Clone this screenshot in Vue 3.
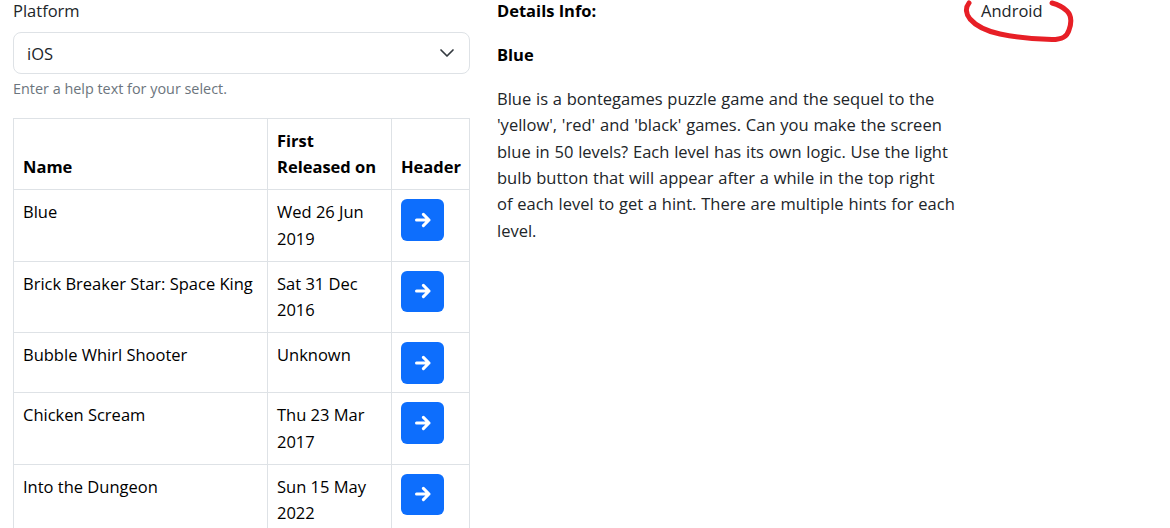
<script setup>
const rows = [
  { name: 'Blue', date: 'Wed 26 Jun 2019' },
  { name: 'Brick Breaker Star: Space King', date: 'Sat 31 Dec 2016' },
  { name: 'Bubble Whirl Shooter', date: 'Unknown' },
  { name: 'Chicken Scream', date: 'Thu 23 Mar 2017' },
  { name: 'Into the Dungeon', date: 'Sun 15 May 2022' },
]
</script>

<template>
  <div class="page">
    <section class="left">
      <label class="label">Platform</label>
      <div class="select">
        <span class="value">iOS</span>
        <svg class="chevron" viewBox="0 0 16 16" width="16" height="16">
          <path d="m2 5 6 6 6-6" fill="none" stroke="#343a40" stroke-width="1.7" stroke-linecap="round" stroke-linejoin="round" />
        </svg>
      </div>
      <div class="help">Enter a help text for your select.</div>
      <table class="games">
        <thead>
          <tr>
            <th class="c1">Name</th>
            <th class="c2">First Released on</th>
            <th class="c3">Header</th>
          </tr>
        </thead>
        <tbody>
          <tr v-for="r in rows" :key="r.name">
            <td>{{ r.name }}</td>
            <td>{{ r.date }}</td>
            <td>
              <button class="go" type="button" aria-label="Open">
                <svg viewBox="0 0 16 16" width="16" height="16">
                  <path d="M1.500 8h12.500M8.400 2.400 14 8l-5.600 5.600" fill="none" stroke="#fff" stroke-width="3" stroke-linecap="round" stroke-linejoin="round" />
                </svg>
              </button>
            </td>
          </tr>
        </tbody>
      </table>
    </section>
    <section class="details">
      <div class="strong">Details Info:</div>
      <div class="strong title">Blue</div>
      <p class="desc">Blue is a bontegames puzzle game and the sequel to the 'yellow', 'red' and 'black' games. Can you make the screen blue in 50 levels? Each level has its own logic. Use the light bulb button that will appear after a while in the top right of&nbsp;each level to get a hint. There are multiple hints for each level.</p>
    </section>
    <div class="tab">Android</div>
    <svg class="scribble" viewBox="0 0 1170 528" width="1170" height="528">
      <path d="M969 3C965 8 966 14 970 19C976 26 986 31 1000 34C1015 37 1035 39.500 1052 39.500C1062 39.500 1067 37 1069 30C1071.500 23 1072 16 1067 11C1063 7 1058 4.500 1052 3" fill="none" stroke="#e71f26" stroke-width="5" stroke-linecap="round" stroke-linejoin="round" />
    </svg>
  </div>
</template>

<style>
html, body { margin: 0; height: 528px; overflow: hidden; background: #fff; }
</style>

<style scoped>
.page {
  display: flex;
  align-items: flex-start;
  height: 528px;
  overflow: hidden;
  padding: 0 0 0 13px;
  box-sizing: border-box;
  font-family: "Open Sans", "Liberation Sans", sans-serif;
  font-size: 16.5px;
  line-height: 26.4px;
  color: #212529;
}
.left { width: 457px; flex: none; margin-top: -2px; }
.label { display: block; margin-bottom: 8px; }
.select {
  display: flex;
  align-items: center;
  justify-content: space-between;
  height: 42px;
  box-sizing: border-box;
  padding: 0 14px 0 13px;
  border: 1px solid #dee2e6;
  border-radius: 8px;
}
.value { position: relative; top: 1px; }
.chevron { display: block; }
.help { font-size: 14.4px; line-height: 21px; margin-top: 4px; color: #6c757d; }
.games {
  margin-top: 18.500px;
  width: 457px;
  table-layout: fixed;
  border-collapse: collapse;
  color: #000;
}
.games th, .games td {
  box-sizing: border-box;
  border: 1px solid #dee2e6;
  padding: 8.800px 9px;
  text-align: left;
  vertical-align: top;
  font-weight: 400;
}
.games th { vertical-align: bottom; font-weight: 700; color: #000; }
.c1 { width: 254px; }
.c2 { width: 124px; }
.c3 { width: 78px; }
.go {
  display: flex;
  align-items: center;
  justify-content: center;
  width: 43px;
  height: 41.600px;
  padding: 0;
  border: 0;
  border-radius: 6px;
  background: #0d6efd;
}
.go svg { display: block; }
.details { width: 462px; margin-left: 27px; flex: none; margin-top: -2px; color: #212529; }
.strong { font-weight: 700; color: #000; }
.title { margin-top: 18px; }
.desc { margin: 17px 0 0; word-spacing: 0.5px; }
.tab { margin-left: 22px; margin-top: -2px; color: #212529; }
.scribble { position: absolute; left: 0; top: 0; pointer-events: none; }
</style>
